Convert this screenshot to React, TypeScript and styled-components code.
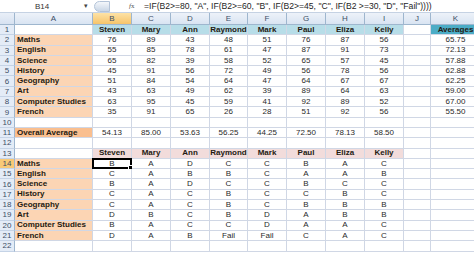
import styled, { createGlobalStyle, css } from "styled-components";

const GlobalStyle = createGlobalStyle`
	html, body {
		margin: 0;
		padding: 0;
		background: #ffffff;
		overflow: hidden;
	}
	body {
		font-family: "Liberation Sans", Arial, sans-serif;
	}
`;

const names = ["Steven", "Mary", "Ann", "Raymond", "Mark", "Paul", "Eliza", "Kelly"];
const subjects = ["Maths", "English", "Science", "History", "Geography", "Art", "Computer Studies", "French"];

const marks = [
	["76", "89", "43", "48", "51", "76", "87", "56"],
	["55", "85", "78", "61", "47", "87", "91", "73"],
	["65", "82", "39", "58", "52", "65", "57", "45"],
	["45", "91", "56", "72", "49", "56", "78", "56"],
	["51", "84", "54", "64", "47", "64", "67", "67"],
	["43", "63", "49", "62", "39", "89", "64", "63"],
	["63", "95", "45", "59", "41", "92", "89", "52"],
	["35", "91", "65", "26", "28", "51", "92", "56"],
];
const averages = ["65.75", "72.13", "57.88", "62.88", "62.25", "59.00", "67.00", "55.50"];
const overall = ["54.13", "85.00", "53.63", "56.25", "44.25", "72.50", "78.13", "58.50"];

const grades = [
	["B", "A", "D", "C", "C", "B", "A", "C"],
	["C", "A", "B", "B", "C", "A", "A", "B"],
	["B", "A", "D", "C", "C", "B", "C", "C"],
	["C", "A", "C", "B", "C", "C", "B", "C"],
	["C", "A", "C", "B", "C", "B", "B", "B"],
	["D", "B", "C", "B", "D", "A", "B", "B"],
	["B", "A", "C", "C", "D", "A", "A", "C"],
	["D", "A", "B", "Fail", "Fail", "C", "A", "C"],
];

const letters = ["A", "B", "C", "D", "E", "F", "G", "H", "I", "J", "K"];

type Fill = "none" | "blue" | "teal" | "peach" | "orange" | "pink";

const fills: Record<Fill, string> = {
	none: "#ffffff",
	blue: "#b7dde8",
	teal: "#4bacc6",
	peach: "#fcd5b4",
	orange: "#fabf8f",
	pink: "#f2dcdb",
};

type CellData = { text?: string; fill?: Fill; bold?: boolean; left?: boolean; selected?: boolean };

const buildRows = (): CellData[][] => {
	const rows: CellData[][] = [];
	const blank = (n: number) => Array.from({ length: n }, () => ({} as CellData));

	rows.push([
		{},
		...names.map((n) => ({ text: n, fill: "blue" as Fill, bold: true })),
		{},
		{ text: "Averages", fill: "teal", bold: true },
	]);
	subjects.forEach((s, i) => {
		rows.push([
			{ text: s, fill: "peach", bold: true, left: true },
			...marks[i].map((m) => ({ text: m })),
			{},
			{ text: averages[i] },
		]);
	});
	rows.push(blank(11));
	rows.push([
		{ text: "Overall Average", fill: "orange", bold: true, left: true },
		...overall.map((m) => ({ text: m })),
		{},
		{},
	]);
	rows.push(blank(11));
	rows.push([{}, ...names.map((n) => ({ text: n, fill: "pink" as Fill, bold: true })), {}, {}]);
	subjects.forEach((s, i) => {
		rows.push([
			{ text: s, fill: "peach", bold: true, left: true },
			...grades[i].map((g, j) => ({ text: g, selected: i === 0 && j === 0 })),
			{},
			{},
		]);
	});
	rows.push(blank(11));
	return rows;
};

export default function App() {
	const rows = buildRows();
	return (
		<>
			<GlobalStyle />
			<Window>
				<FormulaBar>
					<NameBox>B14</NameBox>
					<Arrow>▾</Arrow>
					<Knob />
					<Fx>
						<i>f</i>x
					</Fx>
					<Formula>
						=IF(B2&gt;=80, "A", IF(B2&gt;=60, "B", IF(B2&gt;=45, "C", IF(B2 &gt;=30, "D", "Fail"))))
					</Formula>
				</FormulaBar>
				<Sheet>
					<Corner />
					{letters.map((l) => (
						<ColHead key={l} $active={l === "B"}>
							{l}
						</ColHead>
					))}
					{rows.map((row, r) => (
						<Row key={r} row={row} index={r + 1} />
					))}
				</Sheet>
			</Window>
		</>
	);
}

const Row = ({ row, index }: { row: CellData[]; index: number }) => (
	<>
		<RowHead $active={index === 14}>{index}</RowHead>
		{row.map((c, i) => (
			<Cell key={i} $fill={c.fill ?? "none"} $bold={!!c.bold} $left={!!c.left}>
				{c.text}
				{c.selected && (
					<Selection>
						<Handle />
					</Selection>
				)}
			</Cell>
		))}
	</>
);

const Window = styled.div`
	width: 474px;
	height: 253px;
	display: flex;
	flex-direction: column;
	overflow: hidden;
`;

const FormulaBar = styled.div`
	height: 12px;
	display: flex;
	align-items: center;
	background: #ffffff;
	border-bottom: 1px solid #c5d2e3;
	font-size: 8px;
	color: #222;
`;

const NameBox = styled.div`
	width: 84px;
	text-align: center;
	color: #333;
`;

const Arrow = styled.div`
	width: 8px;
	font-size: 7px;
	color: #444;
`;

const Knob = styled.div`
	width: 16px;
	height: 11px;
	margin-left: 2px;
	border-radius: 8px 0 0 8px;
	background: linear-gradient(#f4f7fb, #c9d6e6);
	border: 1px solid #b3c3d8;
	box-sizing: border-box;
`;

const Fx = styled.div`
	margin-left: 19px;
	width: 12px;
	font-size: 7px;
	color: #555;
	font-family: "Liberation Serif", serif;
`;

const Formula = styled.div`
	margin-left: 3px;
	white-space: nowrap;
	font-size: 8.6px;
	color: #1e1e1e;
`;

const Sheet = styled.div`
	display: grid;
	grid-template-columns: 15px 78px 39px 39px 39px 38px 39px 39px 39px 39px 27px 50px;
	grid-template-rows: 12px;
	grid-auto-rows: 10.3px;
	font-size: 8px;
`;

const headBase = css`
	box-sizing: border-box;
	display: flex;
	align-items: center;
	justify-content: center;
	color: #3d4f66;
	font-size: 8px;
	border-right: 1px solid #9eb6ce;
	border-bottom: 1px solid #9eb6ce;
`;

const Corner = styled.div`
	${headBase};
	background: linear-gradient(#e9eff8, #d7e2f1);
`;

const ColHead = styled.div<{ $active: boolean }>`
	${headBase};
	background: ${(p) =>
		p.$active ? "linear-gradient(#fde2a6, #f6c46a)" : "linear-gradient(#edf2f9, #d9e4f2)"};
`;

const RowHead = styled.div<{ $active: boolean }>`
	${headBase};
	background: ${(p) => (p.$active ? "#f8c977" : "#e4ecf7")};
	border-bottom-color: #c5d3e6;
`;

const Cell = styled.div<{ $fill: Fill; $bold: boolean; $left: boolean }>`
	position: relative;
	box-sizing: border-box;
	display: flex;
	align-items: center;
	justify-content: ${(p) => (p.$left ? "flex-start" : "center")};
	padding-left: ${(p) => (p.$left ? "2px" : "0")};
	background: ${(p) => fills[p.$fill]};
	border-right: 1px solid #d0d7e5;
	border-bottom: 1px solid #d0d7e5;
	font-weight: ${(p) => (p.$bold ? 700 : 400)};
	color: ${(p) => (p.$bold ? "#241a12" : "#2a2a2a")};
	white-space: nowrap;
	overflow: visible;
	line-height: 1;
`;

const Selection = styled.div`
	position: absolute;
	left: -1px;
	top: -1px;
	right: -1px;
	bottom: -1px;
	border: 2px solid #000;
`;

const Handle = styled.div`
	position: absolute;
	right: -4px;
	bottom: -4px;
	width: 4px;
	height: 4px;
	background: #000;
	border: 1px solid #fff;
`;
